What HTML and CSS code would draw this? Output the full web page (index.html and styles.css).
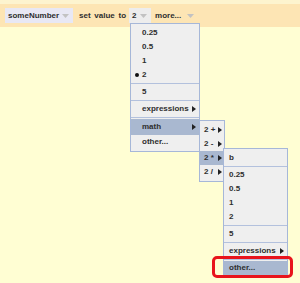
FILE: index.html
```html
<!DOCTYPE html>
<html>
<head>
<meta charset="utf-8">
<link rel="stylesheet" href="styles.css">
</head>
<body>
<div class="topstrip"></div>
<div class="bar">
  <div class="field name"><span>someNumber</span><svg class="dd" width="7" height="4" viewBox="0 0 7 4"><polygon points="0,0 7,0 3.5,4"/></svg></div>
  <span class="label">set value to</span>
  <div class="field num"><span>2</span><svg class="dd" width="7" height="4" viewBox="0 0 7 4"><polygon points="0,0 7,0 3.5,4"/></svg></div>
  <span class="label more">more...<svg class="dd" width="7" height="4" viewBox="0 0 7 4"><polygon points="0,0 7,0 3.5,4"/></svg></span>
</div>

<div class="menu m1">
  <div class="item">0.25</div>
  <div class="item">0.5</div>
  <div class="item">1</div>
  <div class="item checked">2</div>
  <div class="sep"></div>
  <div class="item">5</div>
  <div class="sep"></div>
  <div class="item sub">expressions</div>
  <div class="sep"></div>
  <div class="item sub hl tall">math</div>
  <div class="item">other...</div>
</div>

<div class="menu m2">
  <div class="item sub">2 +</div>
  <div class="item sub">2 -</div>
  <div class="item sub hl">2 *</div>
  <div class="item sub">2 /</div>
</div>

<div class="menu m3">
  <div class="item">b</div>
  <div class="sep"></div>
  <div class="item">0.25</div>
  <div class="item">0.5</div>
  <div class="item">1</div>
  <div class="item">2</div>
  <div class="sep"></div>
  <div class="item">5</div>
  <div class="sep"></div>
  <div class="item sub">expressions</div>
  <div class="sep"></div>
  <div class="item hl">other...</div>
</div>

<div class="callout"></div>
</body>
</html>
```

FILE: styles.css
```css
html, body {
  margin: 0;
  padding: 0;
}
body {
  width: 300px;
  height: 283px;
  position: relative;
  overflow: hidden;
  background: #fffed3;
  font: bold 8px "Liberation Sans", Arial, sans-serif;
  color: #2e2e2e;
}
.topstrip {
  height: 4px;
  background: #fdf4cf;
}
.bar {
  height: 23px;
  background: #fde5b4;
  display: flex;
  align-items: center;
  padding-left: 5px;
}
.field {
  height: 15px;
  display: flex;
  align-items: center;
  justify-content: space-between;
  box-sizing: border-box;
  padding: 0 4px 0 3px;
}
.name {
  width: 68px;
  background: #e8e8f4;
}
.num {
  width: 22px;
  background: #ededed;
  margin-left: 3px;
}
.label {
  word-spacing: 1.5px;
  margin-left: 6px;
  display: flex;
  align-items: center;
}
.more {
  margin-left: 4px;
}
.more .dd {
  margin-left: 6px;
}
.dd {
  fill: #c2c2c2;
}
.menu {
  position: absolute;
  background: #efefef;
  border: 1px solid #a6b7d8;
  box-sizing: border-box;
  padding: 2px 0;
}
.item {
  height: 14px;
  line-height: 14px;
  position: relative;
  white-space: nowrap;
}
.tall {
  height: 16px;
  line-height: 16px;
}
.hl {
  background: #a9b8d0;
}
.sep {
  height: 1px;
  background: #b3c1dd;
  margin: 1px 0;
}
.sub::after {
  content: "";
  position: absolute;
  right: 3px;
  top: 4px;
  border-left: 4px solid #222;
  border-top: 3px solid transparent;
  border-bottom: 3px solid transparent;
}
.tall::after {
  top: 5px;
}
.m1 {
  left: 130px;
  top: 23px;
  width: 70px;
}
.m1 .item {
  padding-left: 11px;
}
.m1 .checked::before {
  content: "";
  position: absolute;
  left: 4px;
  top: 5px;
  width: 4px;
  height: 4px;
  border-radius: 50%;
  background: #111;
}
.m2 {
  left: 199px;
  top: 120px;
  width: 26px;
}
.m2 .item {
  padding-left: 4px;
}
.m2 .sub::after {
  right: 2px;
}
.m3 {
  left: 223px;
  top: 148px;
  width: 65px;
}
.m3 .item {
  padding-left: 5px;
}
.callout {
  position: absolute;
  left: 212px;
  top: 256px;
  width: 81px;
  height: 22px;
  box-sizing: border-box;
  border: 3px solid #e8141c;
  border-radius: 5px;
}
```
